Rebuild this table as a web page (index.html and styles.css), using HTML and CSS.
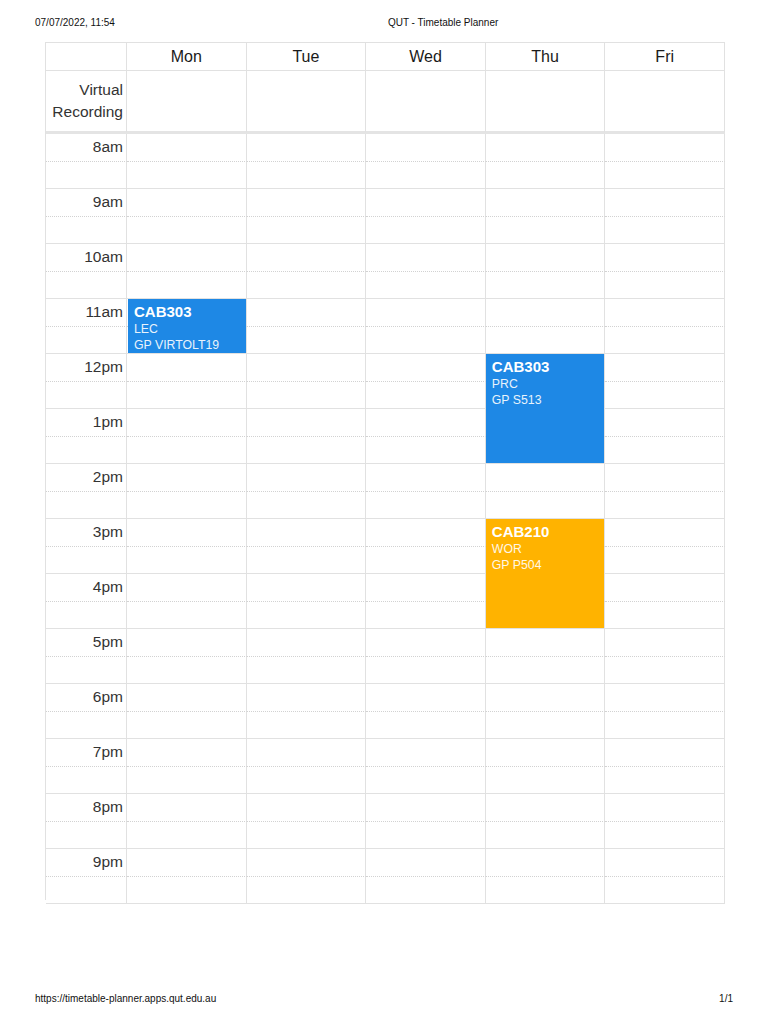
FILE: index.html
```html
<!DOCTYPE html>
<html lang="en">
<head>
<meta charset="utf-8">
<title>QUT - Timetable Planner</title>
<link rel="stylesheet" href="styles.css">
</head>
<body>
<div class="page">
  <header class="print-head">
    <span class="date">07/07/2022, 11:54</span>
    <span class="title">QUT - Timetable Planner</span>
  </header>

  <div class="tt">
    <div class="row head">
      <div class="c"></div>
      <div class="c">Mon</div>
      <div class="c">Tue</div>
      <div class="c">Wed</div>
      <div class="c">Thu</div>
      <div class="c">Fri</div>
    </div>
    <div class="row virtual">
      <div class="c label">Virtual<br>Recording</div>
      <div class="c"></div>
      <div class="c"></div>
      <div class="c"></div>
      <div class="c"></div>
      <div class="c"></div>
    </div>

    <div class="body">
      <div class="col">
        <div class="slots times">
          <div class="slot">8am</div><div class="slot"></div>
          <div class="slot">9am</div><div class="slot"></div>
          <div class="slot">10am</div><div class="slot"></div>
          <div class="slot">11am</div><div class="slot"></div>
          <div class="slot">12pm</div><div class="slot"></div>
          <div class="slot">1pm</div><div class="slot"></div>
          <div class="slot">2pm</div><div class="slot"></div>
          <div class="slot">3pm</div><div class="slot"></div>
          <div class="slot">4pm</div><div class="slot"></div>
          <div class="slot">5pm</div><div class="slot"></div>
          <div class="slot">6pm</div><div class="slot"></div>
          <div class="slot">7pm</div><div class="slot"></div>
          <div class="slot">8pm</div><div class="slot"></div>
          <div class="slot">9pm</div><div class="slot"></div>
        </div>
      </div>

      <div class="col">
        <div class="slots">
          <div class="slot"></div><div class="slot"></div><div class="slot"></div><div class="slot"></div>
          <div class="slot"></div><div class="slot"></div><div class="slot"></div><div class="slot"></div>
          <div class="slot"></div><div class="slot"></div><div class="slot"></div><div class="slot"></div>
          <div class="slot"></div><div class="slot"></div><div class="slot"></div><div class="slot"></div>
          <div class="slot"></div><div class="slot"></div><div class="slot"></div><div class="slot"></div>
          <div class="slot"></div><div class="slot"></div><div class="slot"></div><div class="slot"></div>
          <div class="slot"></div><div class="slot"></div><div class="slot"></div><div class="slot"></div>
        </div>
        <div class="events">
          <div class="ev blue first" style="grid-row: 7 / 9">
            <div class="code">CAB303</div>
            <div class="meta">LEC</div>
            <div class="meta">GP VIRTOLT19</div>
          </div>
        </div>
      </div>

      <div class="col">
        <div class="slots">
          <div class="slot"></div><div class="slot"></div><div class="slot"></div><div class="slot"></div>
          <div class="slot"></div><div class="slot"></div><div class="slot"></div><div class="slot"></div>
          <div class="slot"></div><div class="slot"></div><div class="slot"></div><div class="slot"></div>
          <div class="slot"></div><div class="slot"></div><div class="slot"></div><div class="slot"></div>
          <div class="slot"></div><div class="slot"></div><div class="slot"></div><div class="slot"></div>
          <div class="slot"></div><div class="slot"></div><div class="slot"></div><div class="slot"></div>
          <div class="slot"></div><div class="slot"></div><div class="slot"></div><div class="slot"></div>
        </div>
      </div>

      <div class="col">
        <div class="slots">
          <div class="slot"></div><div class="slot"></div><div class="slot"></div><div class="slot"></div>
          <div class="slot"></div><div class="slot"></div><div class="slot"></div><div class="slot"></div>
          <div class="slot"></div><div class="slot"></div><div class="slot"></div><div class="slot"></div>
          <div class="slot"></div><div class="slot"></div><div class="slot"></div><div class="slot"></div>
          <div class="slot"></div><div class="slot"></div><div class="slot"></div><div class="slot"></div>
          <div class="slot"></div><div class="slot"></div><div class="slot"></div><div class="slot"></div>
          <div class="slot"></div><div class="slot"></div><div class="slot"></div><div class="slot"></div>
        </div>
      </div>

      <div class="col">
        <div class="slots">
          <div class="slot"></div><div class="slot"></div><div class="slot"></div><div class="slot"></div>
          <div class="slot"></div><div class="slot"></div><div class="slot"></div><div class="slot"></div>
          <div class="slot"></div><div class="slot"></div><div class="slot"></div><div class="slot"></div>
          <div class="slot"></div><div class="slot"></div><div class="slot"></div><div class="slot"></div>
          <div class="slot"></div><div class="slot"></div><div class="slot"></div><div class="slot"></div>
          <div class="slot"></div><div class="slot"></div><div class="slot"></div><div class="slot"></div>
          <div class="slot"></div><div class="slot"></div><div class="slot"></div><div class="slot"></div>
        </div>
        <div class="events">
          <div class="ev blue" style="grid-row: 9 / 13">
            <div class="code">CAB303</div>
            <div class="meta">PRC</div>
            <div class="meta">GP S513</div>
          </div>
          <div class="ev amber" style="grid-row: 15 / 19">
            <div class="code">CAB210</div>
            <div class="meta">WOR</div>
            <div class="meta">GP P504</div>
          </div>
        </div>
      </div>

      <div class="col">
        <div class="slots">
          <div class="slot"></div><div class="slot"></div><div class="slot"></div><div class="slot"></div>
          <div class="slot"></div><div class="slot"></div><div class="slot"></div><div class="slot"></div>
          <div class="slot"></div><div class="slot"></div><div class="slot"></div><div class="slot"></div>
          <div class="slot"></div><div class="slot"></div><div class="slot"></div><div class="slot"></div>
          <div class="slot"></div><div class="slot"></div><div class="slot"></div><div class="slot"></div>
          <div class="slot"></div><div class="slot"></div><div class="slot"></div><div class="slot"></div>
          <div class="slot"></div><div class="slot"></div><div class="slot"></div><div class="slot"></div>
        </div>
      </div>
    </div>
  </div>

  <footer class="print-foot">
    <span>https://timetable-planner.apps.qut.edu.au</span>
    <span>1/1</span>
  </footer>
</div>
</body>
</html>
```

FILE: styles.css
```css
* {
  box-sizing: border-box;
}

html,
body {
  margin: 0;
  padding: 0;
  background: #fff;
}

body {
  font-family: "Liberation Sans", Arial, sans-serif;
  color: #222;
}

.page {
  display: flex;
  flex-direction: column;
  width: 768px;
  height: 1024px;
}

/* print header / footer */
.print-head {
  display: flex;
  height: 42px;
  padding: 17px 35px 0;
  font-size: 10px;
  line-height: 12px;
  color: #111;
}

.print-head .title {
  margin-left: 273px;
}

.print-foot {
  display: flex;
  justify-content: space-between;
  margin-top: auto;
  padding: 0 35px 19px;
  font-size: 10px;
  line-height: 12px;
  color: #111;
}

/* timetable */
.tt {
  margin-left: 45px;
  width: 680px;
  border-left: 1px solid #e1e1e1;
  border-top: 1px solid #e1e1e1;
}

.row,
.body {
  display: grid;
  grid-template-columns: 81px repeat(5, 1fr);
}

.row .c {
  border-right: 1px solid #e1e1e1;
  border-bottom: 1px solid #e1e1e1;
}

.head .c {
  height: 28px;
  font-size: 16px;
  line-height: 27px;
  text-align: center;
  color: #1a1a1a;
}

.virtual .c {
  height: 63px;
  border-bottom: 3px solid #e4e4e4;
}

.virtual .label {
  display: flex;
  align-items: center;
  justify-content: flex-end;
  padding-right: 3px;
  text-align: right;
  font-size: 15.5px;
  line-height: 22px;
  color: #333;
}

.body {
  height: 766px;
}

.col {
  display: grid;
  grid-template-columns: 1fr;
  grid-template-rows: 1fr;
  min-width: 0;
}

.slots,
.events {
  grid-area: 1 / 1;
  display: grid;
  grid-template-rows: repeat(28, 1fr);
  min-height: 0;
}

.slot {
  min-height: 0;
  border-right: 1px solid #e1e1e1;
  border-bottom: 1px dotted #d2d2d2;
}

.slot:nth-child(even) {
  border-bottom: 1px solid #e1e1e1;
}

.times .slot {
  padding-right: 3px;
  text-align: right;
  font-size: 15.5px;
  line-height: 26px;
  color: #333;
}

/* events */
.ev {
  margin: 0 1px 1px 0;
  padding: 4px 6px 0;
  color: #fff;
  overflow: hidden;
}

.ev.first {
  margin-left: 1px;
}

.ev.blue {
  background: #1e88e5;
}

.ev.amber {
  background: #ffb300;
}

.ev .code {
  font-size: 15px;
  font-weight: bold;
  line-height: 18px;
}

.ev .meta {
  font-size: 12.3px;
  line-height: 16px;
  opacity: 0.9;
}
```
